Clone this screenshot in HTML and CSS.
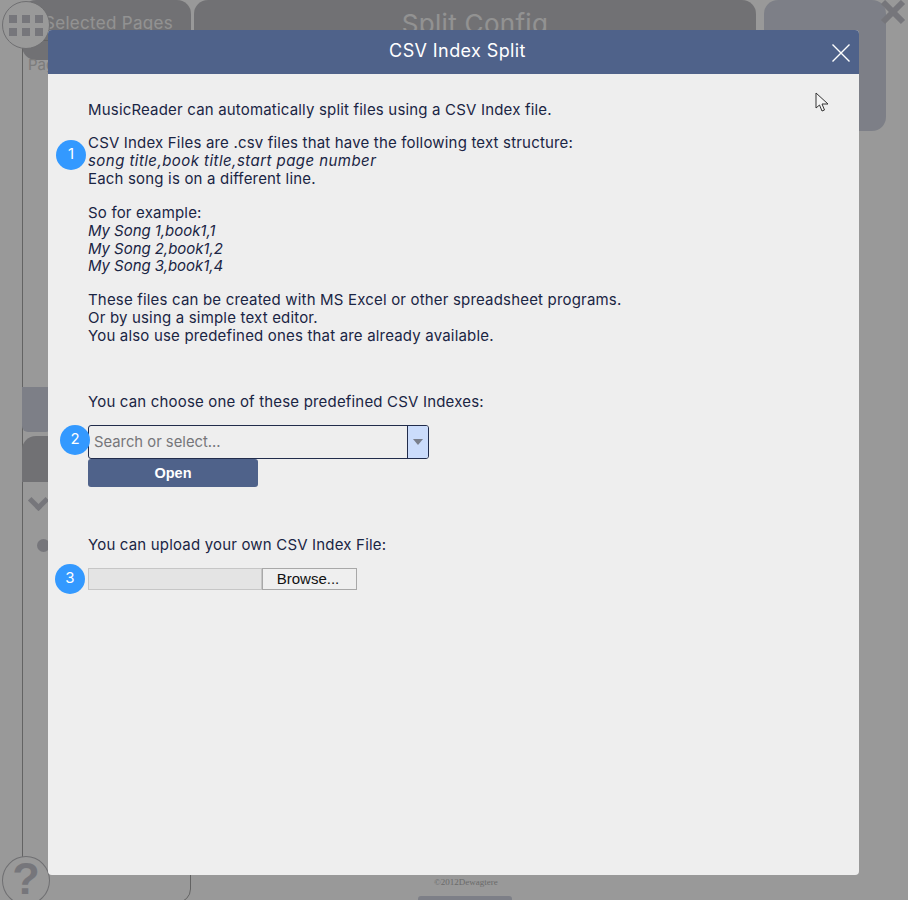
FILE: index.html
```html
<!DOCTYPE html>
<html lang="en">

<head>
    <meta charset="UTF-8">
    <title>CSV Index Split</title>
    <link rel="stylesheet" href="styles.css">
</head>

<body>
    <!-- page behind the dialog -->
    <div class="tab tab-pages"><span class="tab-title">Selected Pages</span></div>
    <div class="tab tab-config"><span class="config-title">Split Config</span></div>
    <div class="tab tab-side"></div>
    <div class="page-list"><span class="page-label">Pages</span></div>
    <div class="page-btn"></div>
    <div class="page-head"></div>
    <div class="check"></div>
    <div class="dot"></div>
    <div class="copy">©2012Dewagtere</div>
    <div class="copy-btn"></div>
    <div class="round-btn grid-btn">
        <div class="grid-icon">
            <i></i><i></i><i></i><i></i><i></i><i></i>
        </div>
    </div>
    <div class="round-btn help-btn"><span class="help-mark">?</span></div>
    <svg class="back-close" width="26" height="26" viewBox="0 0 26 26">
        <path d="M3 3 L23 23 M23 3 L3 23" stroke="#bcbcc3" stroke-width="6" />
    </svg>
    <div class="overlay"></div>

    <div class="dialog">
        <div class="dialog-head">
            <span>CSV Index Split</span>
            <svg class="dialog-close" width="18" height="18" viewBox="0 0 18 18">
                <path d="M0.5 0.5 L17.5 17.5 M17.5 0.5 L0.5 17.5" stroke="#fff" stroke-width="1.4" />
            </svg>
        </div>
        <div class="dialog-body">
            <p>MusicReader can automatically split files using a CSV Index file.</p>
            <p class="has-step">
                <span class="step step-1">1</span>
                CSV Index Files are .csv files that have the following text structure:<br>
                <em>song title,book title,start page number</em><br>
                Each song is on a different line.
            </p>
            <p>
                So for example:<br>
                <em class="sample">My Song 1,book1,1</em><br>
                <em class="sample">My Song 2,book1,2</em><br>
                <em class="sample">My Song 3,book1,4</em>
            </p>
            <p>
                These files can be created with MS Excel or other spreadsheet programs.<br>
                Or by using a simple text editor.<br>
                You also use predefined ones that are already available.
            </p>
            <p class="section">You can choose one of these predefined CSV Indexes:</p>
            <div class="combo">
                <span class="step step-2">2</span>
                <div class="combo-input">Search or select...</div>
                <div class="combo-arrow"><b></b></div>
            </div>
            <button class="open-btn">Open</button>
            <p class="section upload">You can upload your own CSV Index File:</p>
            <div class="file-row">
                <span class="step step-3">3</span>
                <div class="file-name"></div>
                <div class="browse">Browse...</div>
            </div>
        </div>
    </div>

    <svg class="cursor" width="14" height="21" viewBox="0 0 14 21">
        <path d="M1 1 L1 16 L4.5 13 L7 19 L9.5 18 L7 12 L13 12 Z" fill="#f4f4f4" stroke="#333" stroke-width="1" />
    </svg>
</body>

</html>
```

FILE: styles.css
```css
* {
    box-sizing: border-box;
}

html, body {
    height: 900px;
}

body {
    margin: 0;
    position: relative;
    overflow: hidden;
    background: #f2f2f2;
    font-family: "Inter", "Liberation Sans", sans-serif;
}

/* page behind */
.tab {
    position: absolute;
    top: 0;
    border-radius: 14px;
}
.tab-pages {
    left: 22px;
    width: 169px;
    height: 60px;
    background: #b4b4b8;
    text-align: center;
    padding-top: 13px;
}
.tab-title {
    font-size: 17px;
    letter-spacing: 0.3px;
    color: #e8e8e8;
    margin-left: 4px;
}
.tab-config {
    left: 194px;
    width: 562px;
    height: 60px;
    background: #b4b4b8;
    text-align: center;
    padding-top: 8px;
}
.config-title {
    font-size: 26px;
    letter-spacing: 0.3px;
    color: #e8e8e8;
}
.tab-side {
    left: 764px;
    width: 122px;
    height: 131px;
    background: #c6cad6;
}
.page-list {
    position: absolute;
    left: 22px;
    top: 40px;
    width: 169px;
    height: 863px;
    border: 1px solid #9e9e9e;
    border-radius: 0 0 14px 14px;
    padding: 14px 5px;
    font-size: 15px;
    color: #c4c4c4;
}
.page-btn {
    position: absolute;
    left: 22px;
    top: 387px;
    width: 30px;
    height: 45px;
    background: #c6cad6;
    border-radius: 0 0 6px 6px;
}
.page-head {
    position: absolute;
    left: 22px;
    top: 436px;
    width: 30px;
    height: 46px;
    background: #b4b4b8;
    border-radius: 14px 0 0 0;
}
.check {
    position: absolute;
    left: 31px;
    top: 493px;
    width: 15px;
    height: 15px;
    border: solid #bcbcc3;
    border-width: 0 5px 5px 0;
    transform: rotate(45deg);
}
.dot {
    position: absolute;
    left: 37px;
    top: 539px;
    width: 13px;
    height: 13px;
    border-radius: 50%;
    background: #bcbcc3;
}
.copy {
    position: absolute;
    left: 434px;
    top: 877px;
    font-family: "Liberation Serif", serif;
    font-size: 9px;
    color: #aaaaaa;
}
.copy-btn {
    position: absolute;
    left: 418px;
    top: 896px;
    width: 94px;
    height: 20px;
    background: #c6cad6;
    border-radius: 3px;
}
.round-btn {
    position: absolute;
    left: 2px;
    width: 48px;
    height: 48px;
    border: 1px solid #b0b0b4;
    border-radius: 50%;
    background: #f2f2f2;
}
.grid-btn {
    top: 1px;
}
.grid-icon {
    display: grid;
    grid-template-columns: repeat(3, 8px);
    grid-auto-rows: 8px;
    gap: 5px;
    padding: 13px 0 0 6px;
}
.grid-icon i {
    background: #bcbcc3;
}
.help-btn {
    top: 856px;
    height: 49px;
    padding-top: 2px;
    text-align: center;
}
.help-mark {
    display: block;
    height: 40px;
    font-family: "Liberation Sans", sans-serif;
    font-size: 45px;
    font-weight: bold;
    line-height: 40px;
    color: #bcbcc3;
}
.back-close {
    position: absolute;
    left: 880px;
    top: -1px;
}
.overlay {
    position: absolute;
    inset: 0;
    background: rgba(0, 0, 0, 0.37);
}

/* dialog */
.dialog {
    position: absolute;
    left: 48px;
    top: 30px;
    width: 811px;
    height: 845px;
    background: #eeeeee;
    border-radius: 4px;
    overflow: hidden;
}
.dialog-head {
    position: relative;
    height: 44px;
    padding-left: 8px;
    background: #4f628a;
    color: #fff;
    font-size: 18px;
    letter-spacing: 0.4px;
    line-height: 42px;
    text-align: center;
}
.dialog-close {
    position: absolute;
    right: 9px;
    top: 14px;
}
.dialog-body {
    padding: 26.5px 40px;
    font-size: 15px;
    font-weight: 400;
    letter-spacing: 0.18px;
    line-height: 17.8px;
    color: #1a2544;
}
.dialog-body p {
    margin: 0 0 16.2px;
    position: relative;
}
.dialog-body em {
    letter-spacing: 0.45px;
}
.dialog-body .sample {
    letter-spacing: -0.05px;
}
.dialog-body .section {
    margin-top: 48.2px;
    margin-bottom: 13.9px;
}
.dialog-body .upload {
    margin-top: 49.1px;
    margin-bottom: 14.6px;
}
.step {
    position: absolute;
    width: 30px;
    height: 30px;
    border-radius: 50%;
    background: #3399ff;
    color: #fff;
    font-size: 15px;
    font-weight: 400;
    letter-spacing: 0;
    line-height: 28px;
    text-align: center;
}
.step-1 {
    left: -32px;
    top: 6px;
}
.step-2 {
    left: -29px;
    top: -1px;
}
.step-3 {
    left: -33px;
    top: -4px;
}
.combo {
    position: relative;
    display: flex;
    width: 341px;
    height: 34px;
    border: 1px solid #212c4b;
    border-radius: 3px;
}
.combo-input {
    flex: 1;
    padding-left: 5px;
    font-size: 14.8px;
    line-height: 32px;
    letter-spacing: 0;
    color: #76767a;
}
.combo-arrow {
    width: 21px;
    background: #cbdcfb;
    border-left: 1px solid #212c4b;
    border-radius: 0 2px 2px 0;
    display: flex;
    align-items: center;
    justify-content: center;
}
.combo-arrow b {
    border-style: solid;
    border-width: 6px 5px 0;
    border-color: #7a7f8c transparent transparent;
}
.open-btn {
    display: block;
    width: 170px;
    height: 28px;
    margin: 0;
    padding: 0;
    border: 0;
    border-radius: 3px;
    background: #4f628a;
    color: #fff;
    font-family: "Liberation Sans", sans-serif;
    font-size: 14.5px;
    font-weight: bold;
}
.file-row {
    position: relative;
    display: flex;
    width: 269px;
    height: 22px;
}
.file-name {
    width: 174px;
    background: #e4e4e4;
    border: 1px solid #c6c6c6;
}
.browse {
    flex: 1;
    padding-right: 3px;
    background: #efefef;
    border: 1px solid #a8a8a8;
    text-align: center;
    font-family: "Liberation Sans", sans-serif;
    font-size: 15px;
    letter-spacing: 0;
    line-height: 20px;
    color: #111;
}
.cursor {
    position: absolute;
    left: 815px;
    top: 92px;
}
```
